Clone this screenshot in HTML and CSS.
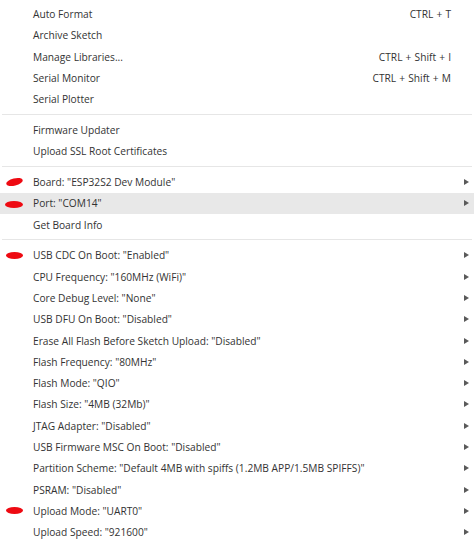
FILE: index.html
```html
<!DOCTYPE html>
<html>
<head>
<meta charset="utf-8">
<link rel="stylesheet" href="styles.css">
</head>
<body>
<div class="menu">
  <div class="row"><span class="gutter"></span><span class="label">Auto Format</span><span class="key">CTRL + T</span><span class="arrow"></span></div>
  <div class="row"><span class="gutter"></span><span class="label">Archive Sketch</span><span class="key"></span><span class="arrow"></span></div>
  <div class="row"><span class="gutter"></span><span class="label">Manage Libraries...</span><span class="key">CTRL + Shift + I</span><span class="arrow"></span></div>
  <div class="row"><span class="gutter"></span><span class="label">Serial Monitor</span><span class="key">CTRL + Shift + M</span><span class="arrow"></span></div>
  <div class="row"><span class="gutter"></span><span class="label">Serial Plotter</span><span class="key"></span><span class="arrow"></span></div>
  <div class="sep"></div>
  <div class="row"><span class="gutter"></span><span class="label">Firmware Updater</span><span class="key"></span><span class="arrow"></span></div>
  <div class="row"><span class="gutter"></span><span class="label">Upload SSL Root Certificates</span><span class="key"></span><span class="arrow"></span></div>
  <div class="sep"></div>
  <div class="row"><span class="gutter"><svg class="mark" width="33" height="21" viewBox="0 0 33 21"><ellipse cx="14.5" cy="10" rx="8.5" ry="3.6" transform="rotate(-14 14.5 10)" fill="#ee0a12"/></svg></span><span class="label">Board: "ESP32S2 Dev Module"</span><span class="key"></span><span class="arrow sub"></span></div>
  <div class="row hl"><span class="gutter"><svg class="mark" width="33" height="21" viewBox="0 0 33 21"><ellipse cx="14" cy="11.5" rx="9" ry="3.6" fill="#ee0a12"/></svg></span><span class="label">Port: "COM14"</span><span class="key"></span><span class="arrow sub"></span></div>
  <div class="row"><span class="gutter"></span><span class="label">Get Board Info</span><span class="key"></span><span class="arrow"></span></div>
  <div class="sep"></div>
  <div class="row"><span class="gutter"><svg class="mark" width="33" height="21" viewBox="0 0 33 21"><ellipse cx="14.5" cy="10.5" rx="8.5" ry="3.4" fill="#ee0a12"/></svg></span><span class="label">USB CDC On Boot: "Enabled"</span><span class="key"></span><span class="arrow sub"></span></div>
  <div class="row"><span class="gutter"></span><span class="label">CPU Frequency: "160MHz (WiFi)"</span><span class="key"></span><span class="arrow sub"></span></div>
  <div class="row"><span class="gutter"></span><span class="label">Core Debug Level: "None"</span><span class="key"></span><span class="arrow sub"></span></div>
  <div class="row"><span class="gutter"></span><span class="label">USB DFU On Boot: "Disabled"</span><span class="key"></span><span class="arrow sub"></span></div>
  <div class="row"><span class="gutter"></span><span class="label">Erase All Flash Before Sketch Upload: "Disabled"</span><span class="key"></span><span class="arrow sub"></span></div>
  <div class="row"><span class="gutter"></span><span class="label">Flash Frequency: "80MHz"</span><span class="key"></span><span class="arrow sub"></span></div>
  <div class="row"><span class="gutter"></span><span class="label">Flash Mode: "QIO"</span><span class="key"></span><span class="arrow sub"></span></div>
  <div class="row"><span class="gutter"></span><span class="label">Flash Size: "4MB (32Mb)"</span><span class="key"></span><span class="arrow sub"></span></div>
  <div class="row"><span class="gutter"></span><span class="label">JTAG Adapter: "Disabled"</span><span class="key"></span><span class="arrow sub"></span></div>
  <div class="row"><span class="gutter"></span><span class="label">USB Firmware MSC On Boot: "Disabled"</span><span class="key"></span><span class="arrow sub"></span></div>
  <div class="row"><span class="gutter"></span><span class="label">Partition Scheme: "Default 4MB with spiffs (1.2MB APP/1.5MB SPIFFS)"</span><span class="key"></span><span class="arrow sub"></span></div>
  <div class="row"><span class="gutter"></span><span class="label">PSRAM: "Disabled"</span><span class="key"></span><span class="arrow sub"></span></div>
  <div class="row"><span class="gutter"><svg class="mark" width="33" height="21" viewBox="0 0 33 21"><ellipse cx="14.5" cy="10.5" rx="8.5" ry="3.4" fill="#ee0a12"/></svg></span><span class="label">Upload Mode: "UART0"</span><span class="key"></span><span class="arrow sub"></span></div>
  <div class="row"><span class="gutter"></span><span class="label">Upload Speed: "921600"</span><span class="key"></span><span class="arrow sub"></span></div>
</div>
</body>
</html>
```

FILE: styles.css
```css
html, body {
  margin: 0;
  padding: 0;
  background: #ffffff;
}
body {
  width: 474px;
  height: 545px;
  overflow: hidden;
  font-family: "Open Sans", "Noto Sans", "Liberation Sans", sans-serif;
  font-size: 10.2px;
  color: #333333;
}
.menu {
  padding-top: 3.35px;
  display: flex;
  flex-direction: column;
}
.row {
  display: flex;
  align-items: center;
  height: 21.3px;
  flex: none;
}
.row.hl {
  background: #e8e8e8;
}
.gutter {
  width: 33px;
  height: 21px;
  flex: none;
  display: flex;
}
.label {
  flex: 1;
  white-space: nowrap;
}
.key {
  white-space: nowrap;
  padding-right: 12px;
  word-spacing: 0.5px;
}
.arrow {
  width: 11px;
  height: 21px;
  flex: none;
  display: flex;
  align-items: center;
}
.arrow.sub::before {
  content: "";
  display: block;
  margin-left: 1px;
  width: 0;
  height: 0;
  border-top: 3.5px solid transparent;
  border-bottom: 3.5px solid transparent;
  border-left: 5px solid #5a5a5a;
}
.sep {
  flex: none;
  height: 1px;
  background: #e6e6e6;
  margin: 4.1px 2px 4.4px 2px;
}
```
